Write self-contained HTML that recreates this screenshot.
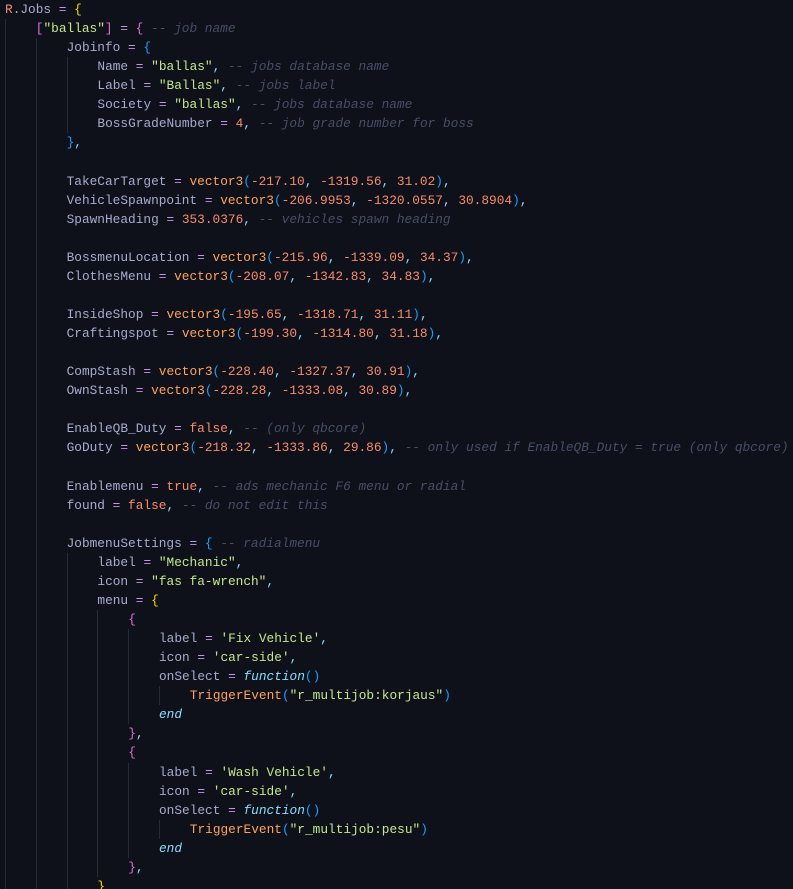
<!DOCTYPE html>
<html><head><meta charset="utf-8"><style>
html,body{margin:0;padding:0;background:#0f111a;width:793px;height:889px;overflow:hidden}
pre{margin:0;padding:0 0 0 5px;font-family:"Liberation Mono",monospace;font-size:12.8px;line-height:19.07px;color:#a6accd;white-space:pre}
.l{height:19.07px}
.i{display:inline-block;width:30.8px;height:19.07px;vertical-align:top;box-shadow:inset 1px 0 0 #262a3a}
.o{color:#c792ea}.s{color:#c3e88d}.n{color:#f78c6c}.f{color:#ffa35c}.c{color:#474e66;font-style:italic}
.p{color:#89ddff}.k{color:#89ddff;font-style:italic}.g{color:#ffd700}.m{color:#da70d6}.b{color:#179fff}.r{color:#f78c6c}
</style></head><body><pre><div class="l"><span class="r">R</span>.Jobs <span class="o">=</span> <span class="g">{</span></div><div class="l"><span class="i"></span><span class="m">[</span><span class="s">"ballas"</span><span class="m">]</span> <span class="o">=</span> <span class="m">{</span> <span class="c">-- job name</span></div><div class="l"><span class="i"></span><span class="i"></span>Jobinfo <span class="o">=</span> <span class="b">{</span></div><div class="l"><span class="i"></span><span class="i"></span><span class="i"></span>Name <span class="o">=</span> <span class="s">"ballas"</span><span class="p">,</span> <span class="c">-- jobs database name</span></div><div class="l"><span class="i"></span><span class="i"></span><span class="i"></span>Label <span class="o">=</span> <span class="s">"Ballas"</span><span class="p">,</span> <span class="c">-- jobs label</span></div><div class="l"><span class="i"></span><span class="i"></span><span class="i"></span>Society <span class="o">=</span> <span class="s">"ballas"</span><span class="p">,</span> <span class="c">-- jobs database name</span></div><div class="l"><span class="i"></span><span class="i"></span><span class="i"></span>BossGradeNumber <span class="o">=</span> <span class="n">4</span><span class="p">,</span> <span class="c">-- job grade number for boss</span></div><div class="l"><span class="i"></span><span class="i"></span><span class="b">}</span><span class="p">,</span></div><div class="l"><span class="i"></span><span class="i"></span></div><div class="l"><span class="i"></span><span class="i"></span>TakeCarTarget <span class="o">=</span> <span class="f">vector3</span><span class="b">(</span><span class="n">-217.10</span><span class="p">,</span> <span class="n">-1319.56</span><span class="p">,</span> <span class="n">31.02</span><span class="b">)</span><span class="p">,</span></div><div class="l"><span class="i"></span><span class="i"></span>VehicleSpawnpoint <span class="o">=</span> <span class="f">vector3</span><span class="b">(</span><span class="n">-206.9953</span><span class="p">,</span> <span class="n">-1320.0557</span><span class="p">,</span> <span class="n">30.8904</span><span class="b">)</span><span class="p">,</span></div><div class="l"><span class="i"></span><span class="i"></span>SpawnHeading <span class="o">=</span> <span class="n">353.0376</span><span class="p">,</span> <span class="c">-- vehicles spawn heading</span></div><div class="l"><span class="i"></span><span class="i"></span></div><div class="l"><span class="i"></span><span class="i"></span>BossmenuLocation <span class="o">=</span> <span class="f">vector3</span><span class="b">(</span><span class="n">-215.96</span><span class="p">,</span> <span class="n">-1339.09</span><span class="p">,</span> <span class="n">34.37</span><span class="b">)</span><span class="p">,</span></div><div class="l"><span class="i"></span><span class="i"></span>ClothesMenu <span class="o">=</span> <span class="f">vector3</span><span class="b">(</span><span class="n">-208.07</span><span class="p">,</span> <span class="n">-1342.83</span><span class="p">,</span> <span class="n">34.83</span><span class="b">)</span><span class="p">,</span></div><div class="l"><span class="i"></span><span class="i"></span></div><div class="l"><span class="i"></span><span class="i"></span>InsideShop <span class="o">=</span> <span class="f">vector3</span><span class="b">(</span><span class="n">-195.65</span><span class="p">,</span> <span class="n">-1318.71</span><span class="p">,</span> <span class="n">31.11</span><span class="b">)</span><span class="p">,</span></div><div class="l"><span class="i"></span><span class="i"></span>Craftingspot <span class="o">=</span> <span class="f">vector3</span><span class="b">(</span><span class="n">-199.30</span><span class="p">,</span> <span class="n">-1314.80</span><span class="p">,</span> <span class="n">31.18</span><span class="b">)</span><span class="p">,</span></div><div class="l"><span class="i"></span><span class="i"></span></div><div class="l"><span class="i"></span><span class="i"></span>CompStash <span class="o">=</span> <span class="f">vector3</span><span class="b">(</span><span class="n">-228.40</span><span class="p">,</span> <span class="n">-1327.37</span><span class="p">,</span> <span class="n">30.91</span><span class="b">)</span><span class="p">,</span></div><div class="l"><span class="i"></span><span class="i"></span>OwnStash <span class="o">=</span> <span class="f">vector3</span><span class="b">(</span><span class="n">-228.28</span><span class="p">,</span> <span class="n">-1333.08</span><span class="p">,</span> <span class="n">30.89</span><span class="b">)</span><span class="p">,</span></div><div class="l"><span class="i"></span><span class="i"></span></div><div class="l"><span class="i"></span><span class="i"></span>EnableQB_Duty <span class="o">=</span> <span class="n">false</span><span class="p">,</span> <span class="c">-- (only qbcore)</span></div><div class="l"><span class="i"></span><span class="i"></span>GoDuty <span class="o">=</span> <span class="f">vector3</span><span class="b">(</span><span class="n">-218.32</span><span class="p">,</span> <span class="n">-1333.86</span><span class="p">,</span> <span class="n">29.86</span><span class="b">)</span><span class="p">,</span> <span class="c">-- only used if EnableQB_Duty = true (only qbcore)</span></div><div class="l"><span class="i"></span><span class="i"></span></div><div class="l"><span class="i"></span><span class="i"></span>Enablemenu <span class="o">=</span> <span class="n">true</span><span class="p">,</span> <span class="c">-- ads mechanic F6 menu or radial</span></div><div class="l"><span class="i"></span><span class="i"></span>found <span class="o">=</span> <span class="n">false</span><span class="p">,</span> <span class="c">-- do not edit this</span></div><div class="l"><span class="i"></span><span class="i"></span></div><div class="l"><span class="i"></span><span class="i"></span>JobmenuSettings <span class="o">=</span> <span class="b">{</span> <span class="c">-- radialmenu</span></div><div class="l"><span class="i"></span><span class="i"></span><span class="i"></span>label <span class="o">=</span> <span class="s">"Mechanic"</span><span class="p">,</span></div><div class="l"><span class="i"></span><span class="i"></span><span class="i"></span>icon <span class="o">=</span> <span class="s">"fas fa-wrench"</span><span class="p">,</span></div><div class="l"><span class="i"></span><span class="i"></span><span class="i"></span>menu <span class="o">=</span> <span class="g">{</span></div><div class="l"><span class="i"></span><span class="i"></span><span class="i"></span><span class="i"></span><span class="m">{</span></div><div class="l"><span class="i"></span><span class="i"></span><span class="i"></span><span class="i"></span><span class="i"></span>label <span class="o">=</span> <span class="s">'Fix Vehicle'</span><span class="p">,</span></div><div class="l"><span class="i"></span><span class="i"></span><span class="i"></span><span class="i"></span><span class="i"></span>icon <span class="o">=</span> <span class="s">'car-side'</span><span class="p">,</span></div><div class="l"><span class="i"></span><span class="i"></span><span class="i"></span><span class="i"></span><span class="i"></span>onSelect <span class="o">=</span> <span class="k">function</span><span class="b">()</span></div><div class="l"><span class="i"></span><span class="i"></span><span class="i"></span><span class="i"></span><span class="i"></span><span class="i"></span><span class="f">TriggerEvent</span><span class="b">(</span><span class="s">"r_multijob:korjaus"</span><span class="b">)</span></div><div class="l"><span class="i"></span><span class="i"></span><span class="i"></span><span class="i"></span><span class="i"></span><span class="k">end</span></div><div class="l"><span class="i"></span><span class="i"></span><span class="i"></span><span class="i"></span><span class="m">}</span><span class="p">,</span></div><div class="l"><span class="i"></span><span class="i"></span><span class="i"></span><span class="i"></span><span class="m">{</span></div><div class="l"><span class="i"></span><span class="i"></span><span class="i"></span><span class="i"></span><span class="i"></span>label <span class="o">=</span> <span class="s">'Wash Vehicle'</span><span class="p">,</span></div><div class="l"><span class="i"></span><span class="i"></span><span class="i"></span><span class="i"></span><span class="i"></span>icon <span class="o">=</span> <span class="s">'car-side'</span><span class="p">,</span></div><div class="l"><span class="i"></span><span class="i"></span><span class="i"></span><span class="i"></span><span class="i"></span>onSelect <span class="o">=</span> <span class="k">function</span><span class="b">()</span></div><div class="l"><span class="i"></span><span class="i"></span><span class="i"></span><span class="i"></span><span class="i"></span><span class="i"></span><span class="f">TriggerEvent</span><span class="b">(</span><span class="s">"r_multijob:pesu"</span><span class="b">)</span></div><div class="l"><span class="i"></span><span class="i"></span><span class="i"></span><span class="i"></span><span class="i"></span><span class="k">end</span></div><div class="l"><span class="i"></span><span class="i"></span><span class="i"></span><span class="i"></span><span class="m">}</span><span class="p">,</span></div><div class="l"><span class="i"></span><span class="i"></span><span class="i"></span><span class="g">}</span></div></pre></body></html>
